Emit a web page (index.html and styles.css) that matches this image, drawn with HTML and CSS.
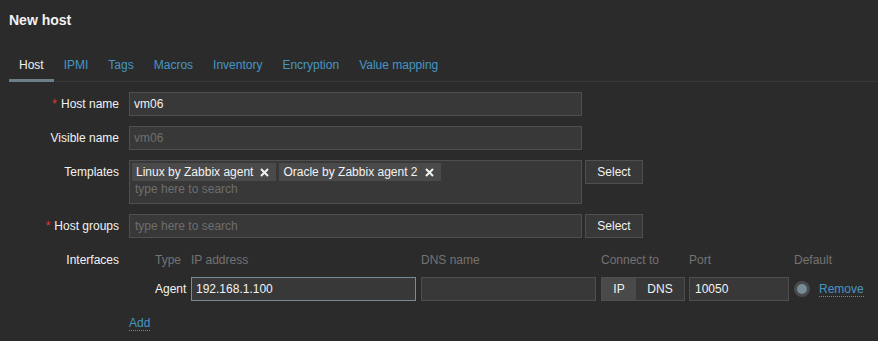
FILE: index.html
```html
<!DOCTYPE html>
<html lang="en">
<head>
  <meta charset="UTF-8">
  <title>New host</title>
  <link rel="stylesheet" href="styles.css">
</head>
<body>

  <div class="dialog">
    <h4 class="dialog-title">New host</h4>

    <ul class="tabs">
      <li class="tab active">Host</li>
      <li class="tab"><a href="#">IPMI</a></li>
      <li class="tab"><a href="#">Tags</a></li>
      <li class="tab"><a href="#">Macros</a></li>
      <li class="tab"><a href="#">Inventory</a></li>
      <li class="tab"><a href="#">Encryption</a></li>
      <li class="tab"><a href="#">Value mapping</a></li>
    </ul>

    <div class="form">
      <label class="form-label required">Host name</label>
      <div class="form-field">
        <input class="text-input" type="text" value="vm06">
      </div>

      <label class="form-label">Visible name</label>
      <div class="form-field">
        <input class="text-input" type="text" placeholder="vm06">
      </div>

      <label class="form-label">Templates</label>
      <div class="form-field">
        <div class="multiselect">
          <ul class="ms-tags">
            <li class="ms-tag">Linux by Zabbix agent <span class="ms-remove"><svg width="9" height="9" viewBox="0 0 9 9"><path d="M1 1L8 8M8 1L1 8" stroke="#f2f2f2" stroke-width="2"/></svg></span></li>
            <li class="ms-tag">Oracle by Zabbix agent 2 <span class="ms-remove"><svg width="9" height="9" viewBox="0 0 9 9"><path d="M1 1L8 8M8 1L1 8" stroke="#f2f2f2" stroke-width="2"/></svg></span></li>
          </ul>
          <input class="ms-search" type="text" placeholder="type here to search">
        </div>
        <button class="btn-grey">Select</button>
      </div>

      <label class="form-label required">Host groups</label>
      <div class="form-field">
        <div class="multiselect single">
          <input class="ms-search" type="text" placeholder="type here to search">
        </div>
        <button class="btn-grey">Select</button>
      </div>

      <label class="form-label">Interfaces</label>
      <div class="form-field">
        <div class="iface">
          <span></span>
          <span class="iface-head">Type</span>
          <span class="iface-head">IP address</span>
          <span class="iface-head">DNS name</span>
          <span class="iface-head">Connect to</span>
          <span class="iface-head">Port</span>
          <span class="iface-head">Default</span>

          <span></span>
          <span class="iface-type">Agent</span>
          <span><input class="text-input ip-input focused" type="text" value="192.168.1.100"></span>
          <span><input class="text-input dns-input" type="text"></span>
          <span class="toggle">
            <span class="toggle-item on">IP</span>
            <span class="toggle-item">DNS</span>
          </span>
          <span><input class="text-input port-input" type="text" value="10050"></span>
          <span class="iface-default">
            <span class="radio"></span>
            <a class="link" href="#">Remove</a>
          </span>
        </div>
      </div>

      <span></span>
      <div class="form-field add-row">
        <a class="link" href="#">Add</a>
      </div>
    </div>
  </div>

</body>
</html>
```

FILE: styles.css
```css
body {
  margin: 0;
  background: #2b2b2b;
  color: #f2f2f2;
  font-family: "Liberation Sans", Arial, sans-serif;
  font-size: 12px;
}

.dialog-title {
  margin: 0 0 19px;
  padding: 11px 9px 0;
  font-size: 14px;
  line-height: 18px;
  font-weight: bold;
}

.tabs {
  display: flex;
  list-style: none;
  margin: 0 0 0 9px;
  padding: 0;
  border-bottom: 1px solid #383838;
}

.tab {
  padding: 10px 10px 7px;
  line-height: 14px;
  margin-bottom: -1px;
  border-bottom: 3px solid transparent;
}

.tab a {
  color: #4796c4;
  text-decoration: none;
}

.tab.active {
  border-bottom-color: #6c7f8a;
}

.form {
  display: grid;
  grid-template-columns: 110px 1fr;
  column-gap: 10px;
  row-gap: 10px;
  margin: 10px 0 0 9px;
}

.form-label {
  text-align: right;
  line-height: 24px;
}

.form-label.required::before {
  content: "*";
  color: #e33734;
  margin-right: 4px;
}

.form-field {
  display: flex;
  align-items: flex-start;
  gap: 3px;
}

.text-input {
  box-sizing: border-box;
  width: 453px;
  height: 24px;
  padding: 0 4px;
  margin: 0;
  background: #383838;
  border: 1px solid #4f4f4f;
  color: #f2f2f2;
  font: inherit;
  outline: none;
}

.text-input::placeholder,
.ms-search::placeholder {
  color: #6e6e6e;
}

.text-input.focused {
  border-color: #768d99;
}

.multiselect {
  box-sizing: border-box;
  width: 453px;
  min-height: 24px;
  padding: 2px 2px 6px;
  background: #383838;
  border: 1px solid #4f4f4f;
}

.multiselect.single {
  padding: 0 2px;
}

.ms-tags {
  display: flex;
  gap: 3px;
  list-style: none;
  margin: 0;
  padding: 0;
}

.ms-tag {
  display: flex;
  align-items: center;
  height: 18px;
  padding: 0 7px 0 4px;
  background: #4a4a4a;
  line-height: 18px;
}

.ms-remove {
  display: inline-flex;
  margin-left: 7px;
}

.ms-search {
  display: block;
  box-sizing: border-box;
  width: 100%;
  height: 22px;
  padding: 0 3px;
  margin: 0;
  background: transparent;
  border: none;
  color: #f2f2f2;
  font: inherit;
  outline: none;
}

.multiselect .ms-tags + .ms-search {
  height: 16px;
}

.btn-grey {
  box-sizing: border-box;
  width: 58px;
  height: 24px;
  padding: 0;
  background: #383838;
  border: 1px solid #4f4f4f;
  color: #f2f2f2;
  font: inherit;
}

.iface {
  display: grid;
  grid-template-columns: 26px 36px 230px 180px 88px 105px auto;
  grid-auto-rows: 24px;
  row-gap: 5px;
  line-height: 24px;
}

.iface-head {
  color: #737373;
}

.ip-input {
  width: 225px;
}

.dns-input {
  width: 175px;
}

.port-input {
  width: 100px;
  padding-left: 5px;
}

.toggle {
  display: flex;
  box-sizing: border-box;
  width: 84px;
  height: 24px;
  border: 1px solid #4f4f4f;
  background: #383838;
  line-height: 22px;
}

.toggle-item {
  flex: 1;
  text-align: center;
}

.toggle-item.on {
  flex: 0 0 34px;
  background: #4a4a4a;
}

.iface-default {
  display: flex;
  align-items: center;
  gap: 9px;
}

.radio {
  box-sizing: border-box;
  width: 16px;
  height: 16px;
  border-radius: 50%;
  background: #4a4a4a;
  display: flex;
  align-items: center;
  justify-content: center;
}

.radio::after {
  content: "";
  width: 10px;
  height: 10px;
  border-radius: 50%;
  background: #768d99;
}

.link {
  color: #4796c4;
  text-decoration: none;
  border-bottom: 1px dotted #4796c4;
  line-height: 14px;
}

.add-row {
  line-height: 24px;
  align-items: center;
  height: 24px;
}
```
